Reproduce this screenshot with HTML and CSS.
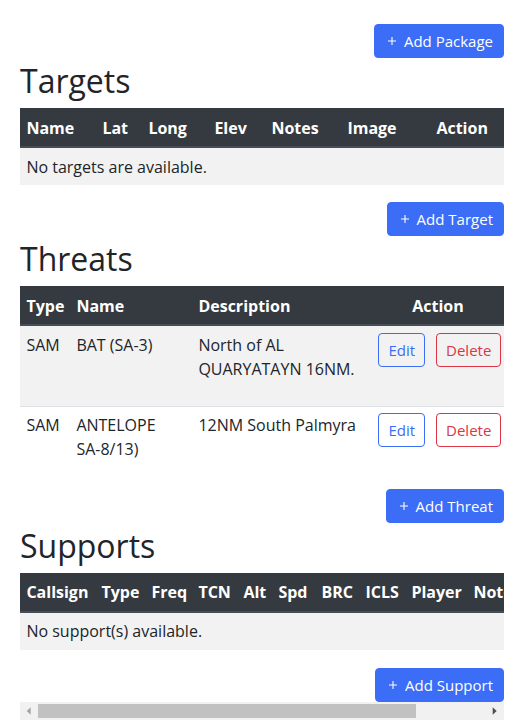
FILE: index.html
```html
<!DOCTYPE html>
<html lang="en">
<head>
<meta charset="utf-8">
<title>Package</title>
<link rel="stylesheet" href="styles.css">
</head>
<body>
<div class="page">
  <div class="scroller">
    <div class="toolbar">
      <button class="btn btn-primary"><svg class="plus" viewBox="0 0 8 8"><path d="M4 0V8M0 4H8"/></svg><span>Add Package</span></button>
    </div>
    <h2>Targets</h2>
    <table class="table targets">
      <colgroup><col class="w76"><col class="w46"><col class="w66"><col class="w57"><col class="w76"><col class="w89"><col class="w74"></colgroup>
      <thead>
        <tr><th>Name</th><th>Lat</th><th>Long</th><th>Elev</th><th>Notes</th><th>Image</th><th>Action</th></tr>
      </thead>
      <tbody>
        <tr class="stripe"><td colspan="7">No targets are available.</td></tr>
      </tbody>
    </table>

    <div class="toolbar">
      <button class="btn btn-primary"><svg class="plus" viewBox="0 0 8 8"><path d="M4 0V8M0 4H8"/></svg><span>Add Target</span></button>
    </div>
    <h2>Threats</h2>
    <table class="table threats">
      <colgroup><col class="w50"><col class="w122"><col class="w180"><col class="w132"></colgroup>
      <thead>
        <tr><th>Type</th><th>Name</th><th>Description</th><th class="center">Action</th></tr>
      </thead>
      <tbody>
        <tr class="stripe">
          <td>SAM</td>
          <td>BAT <span class="nowrap">(SA-3)</span></td>
          <td>North of AL QUARYATAYN 16NM.</td>
          <td><div class="actions"><button class="btn btn-outline-primary">Edit</button><button class="btn btn-outline-danger">Delete</button></div></td>
        </tr>
        <tr>
          <td>SAM</td>
          <td>ANTELOPE <span class="nowrap">SA-8/13)</span></td>
          <td>12NM South Palmyra</td>
          <td><div class="actions"><button class="btn btn-outline-primary">Edit</button><button class="btn btn-outline-danger">Delete</button></div></td>
        </tr>
      </tbody>
    </table>

    <div class="toolbar">
      <button class="btn btn-primary"><svg class="plus" viewBox="0 0 8 8"><path d="M4 0V8M0 4H8"/></svg><span>Add Threat</span></button>
    </div>
    <h2>Supports</h2>
    <table class="table supports">
      <colgroup><col class="w75"><col class="w50"><col class="w47"><col class="w45"><col class="w35"><col class="w43"><col class="w44"><col class="w46"><col class="w62"><col class="w63"><col class="w66"></colgroup>
      <thead>
        <tr><th>Callsign</th><th>Type</th><th>Freq</th><th>TCN</th><th>Alt</th><th>Spd</th><th>BRC</th><th>ICLS</th><th>Player</th><th>Notes</th><th>Action</th></tr>
      </thead>
      <tbody>
        <tr class="stripe"><td colspan="11">No support(s) available.</td></tr>
      </tbody>
    </table>

    <div class="toolbar last">
      <button class="btn btn-primary"><svg class="plus" viewBox="0 0 8 8"><path d="M4 0V8M0 4H8"/></svg><span>Add Support</span></button>
    </div>
  </div>
  <div class="hscroll" aria-hidden="true">
    <div class="sb-btn"><svg viewBox="0 0 17 18" class="sb-arrow"><path d="M10.7 5.2 L6.7 9 L10.7 12.8z" fill="#a3a3a3"/></svg></div>
    <div class="sb-track"><div class="sb-thumb"></div></div>
    <div class="sb-btn"><svg viewBox="0 0 17 18" class="sb-arrow"><path d="M5.7 5.2 L9.7 9 L5.7 12.8z" fill="#505050"/></svg></div>
  </div>
</div>
</body>
</html>
```

FILE: styles.css
```css
* { box-sizing: border-box; }

body {
  margin: 0;
  font-family: "Open Sans", "Noto Sans", sans-serif;
  font-size: 16px;
  line-height: 1.5;
  color: #212529;
  background: #fff;
}

.page {
  padding: 24px 22px 0 20px;
}

.scroller {
  width: 484px;
  overflow: hidden;
}

.hscroll {
  width: 484px;
  height: 18px;
  display: flex;
  background: #f1f1f1;
}
.sb-btn {
  width: 17px;
  height: 18px;
  flex: none;
}
.sb-arrow {
  display: block;
  width: 17px;
  height: 18px;
}
.sb-track {
  flex: 1;
  padding: 2px 0 2px 1px;
}
.sb-thumb {
  width: 378px;
  height: 14px;
  background: #c1c1c1;
}

.toolbar {
  display: flex;
  justify-content: flex-end;
  margin-bottom: 4px;
}
.toolbar.last {
  margin-bottom: 0;
}

h2 {
  margin: 0 0 8px;
  font-size: 32px;
  font-weight: 500;
  line-height: 1.2;
}

.nowrap { white-space: nowrap; }

.btn {
  font-family: inherit;
  font-size: 15px;
  line-height: 24px;
  height: 34px;
  border-radius: 4px;
  border: 1px solid transparent;
  background: transparent;
  cursor: pointer;
  display: inline-flex;
  align-items: center;
  white-space: nowrap;
}

.btn-primary {
  background: #3b6df7;
  border-color: #3b6df7;
  color: #fff;
  padding: 0 10px 0 13px;
  gap: 8px;
}

.plus {
  width: 8px;
  height: 8px;
  stroke: #fff;
  stroke-width: 1.1;
  fill: none;
}

.btn-outline-primary {
  color: #3b6df7;
  border-color: #3b6df7;
  padding: 0 9px;
}

.btn-outline-danger {
  color: #dc3545;
  border-color: #dc3545;
  padding: 0 9px;
}

.table {
  border-collapse: collapse;
  table-layout: fixed;
  width: 484px;
  margin-bottom: 17px;
}
.table.threats {
  margin-bottom: 2px;
}
.table.supports {
  width: 576px;
  margin-bottom: 18px;
}

.table th {
  background: #343a40;
  color: #fff;
  font-weight: 700;
  text-align: left;
  padding: 6.4px;
  border-top: 1px solid #343a40;
  border-bottom: 2px solid #454d55;
  white-space: nowrap;
  overflow: hidden;
}
.table th.center {
  text-align: center;
}

.table td {
  padding: 6.4px;
  border-top: 1px solid #dee2e6;
  vertical-align: top;
}

.table tr.stripe td {
  background: #f2f2f2;
}

.actions {
  display: flex;
  gap: 11px;
  min-height: 67px;
  align-items: flex-start;
}
.actions .btn {
  flex: none;
}

col.w35 { width: 35px; }
col.w43 { width: 43px; }
col.w44 { width: 44px; }
col.w45 { width: 45px; }
col.w46 { width: 46px; }
col.w47 { width: 47px; }
col.w50 { width: 50px; }
col.w57 { width: 57px; }
col.w62 { width: 62px; }
col.w63 { width: 63px; }
col.w66 { width: 66px; }
col.w74 { width: 74px; }
col.w75 { width: 75px; }
col.w76 { width: 76px; }
col.w89 { width: 89px; }
col.w122 { width: 122px; }
col.w132 { width: 132px; }
col.w180 { width: 180px; }
```
